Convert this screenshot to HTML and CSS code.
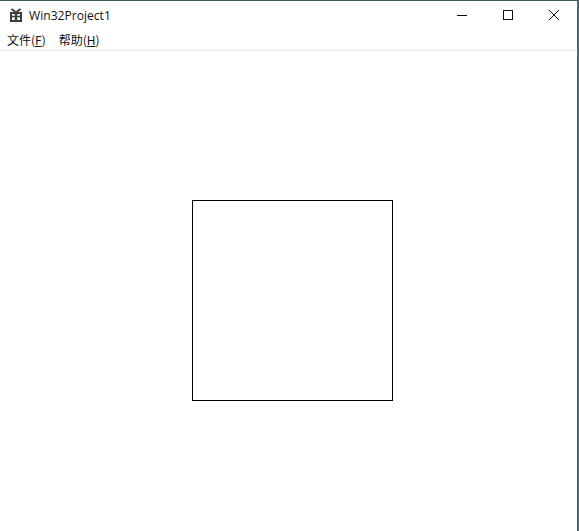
FILE: index.html
```html
<!DOCTYPE html>
<html lang="zh">
<head>
<meta charset="utf-8">
<title>Win32Project1</title>
<link rel="stylesheet" href="styles.css">
</head>
<body>
<div class="window">
  <header class="titlebar">
    <svg class="app-icon" width="12" height="14" viewBox="0 0 12 14" aria-hidden="true">
      <path d="M1 5h10v8H1z" fill="none" stroke="#3c3c3c" stroke-width="2"/>
      <path d="M0 8.500h12" stroke="#3c3c3c" stroke-width="1.500"/>
      <path d="M6 4v10" stroke="#3c3c3c" stroke-width="2.500"/>
      <path d="M1.500 1l4 3M10.500 1l-4 3" fill="none" stroke="#3c3c3c" stroke-width="2"/>
    </svg>
    <span class="title">Win32Project1</span>
    <div class="controls">
      <span class="control">
        <svg width="12" height="12" viewBox="0 0 12 12" aria-hidden="true"><path d="M1 6.500h10" stroke="#111" stroke-width="1"/></svg>
      </span>
      <span class="control">
        <svg width="12" height="12" viewBox="0 0 12 12" aria-hidden="true"><rect x="1.500" y="1.500" width="9" height="9" fill="none" stroke="#111" stroke-width="1"/></svg>
      </span>
      <span class="control">
        <svg width="12" height="12" viewBox="0 0 12 12" aria-hidden="true"><path d="M1 1l10 10M11 1L1 11" stroke="#111" stroke-width="1"/></svg>
      </span>
    </div>
  </header>
  <nav class="menubar">
    <span class="menu-item">文件(<u>F</u>)</span>
    <span class="menu-item">帮助(<u>H</u>)</span>
  </nav>
  <main class="client">
    <div class="square"></div>
  </main>
</div>
</body>
</html>
```

FILE: styles.css
```css
html, body {
  margin: 0;
  padding: 0;
  height: 100%;
  background: #fff;
}
.window {
  box-sizing: border-box;
  width: 579px;
  height: 531px;
  display: flex;
  flex-direction: column;
  background: #fff;
  border-top: 1px solid #3f5a60;
  border-right: 2px solid #4a6a70;
  font-family: "Liberation Sans", "Noto Sans CJK SC", sans-serif;
  color: #111;
  overflow: hidden;
}
.titlebar {
  height: 28px;
  display: flex;
  align-items: center;
  padding-left: 10px;
}
.app-icon {
  flex: none;
}
.title {
  margin-left: 7px;
  font-family: "Open Sans", "Liberation Sans", sans-serif;
  font-size: 12.100px;
  color: #111;
}
.controls {
  margin-left: auto;
  display: flex;
}
.control {
  width: 46px;
  height: 28px;
  display: flex;
  align-items: center;
  justify-content: center;
}
.menubar {
  height: 20px;
  display: flex;
  align-items: center;
  gap: 13px;
  padding-left: 7px;
  border-bottom: 2px solid #f0f0f0;
  font-size: 12px;
  font-family: "Noto Sans CJK SC", sans-serif;
}
.menu-item u {
  text-underline-offset: 1px;
}
.client {
  flex: 1;
  padding: 149px 0 0 192px;
}
.square {
  box-sizing: border-box;
  width: 201px;
  height: 201px;
  border: 1px solid #000;
}
```
